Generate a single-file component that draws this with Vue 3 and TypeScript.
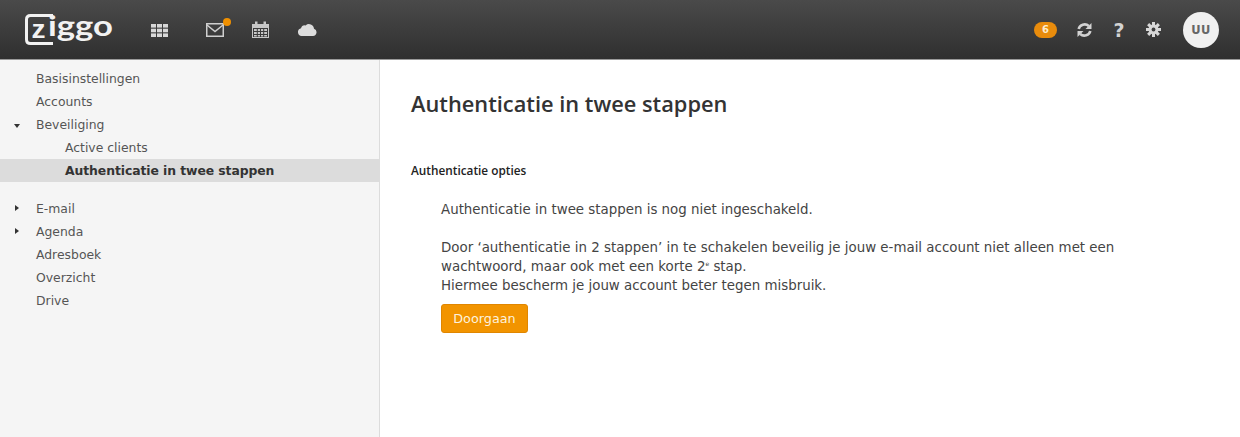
<script setup lang="ts">
interface NavItem { label: string; level: number; arrow?: 'down' | 'right'; active?: boolean; gap?: boolean }
const items: NavItem[] = [
  { label: 'Basisinstellingen', level: 0 },
  { label: 'Accounts', level: 0 },
  { label: 'Beveiliging', level: 0, arrow: 'down' },
  { label: 'Active clients', level: 1 },
  { label: 'Authenticatie in twee stappen', level: 1, active: true },
  { label: 'E-mail', level: 0, arrow: 'right', gap: true },
  { label: 'Agenda', level: 0, arrow: 'right' },
  { label: 'Adresboek', level: 0 },
  { label: 'Overzicht', level: 0 },
  { label: 'Drive', level: 0 },
]
</script>

<template>
  <div class="page">
    <header class="topbar">
      <svg class="logo" width="92" height="38" viewBox="0 0 92 38" fill="#f2f2f2">
        <path d="M29 4.500H6.500Q2.500 4.500 2.500 8.500V28.500Q2.500 32.500 6.500 32.500H29" fill="none" stroke="#f2f2f2" stroke-width="3" />
        <text x="7.500" y="26.500" font-family="Liberation Sans, sans-serif" font-weight="700" font-size="26" textLength="14" lengthAdjust="spacingAndGlyphs">z</text>
        <text x="24" y="25" font-family="Lato, sans-serif" font-weight="700" font-size="28" textLength="65" lengthAdjust="spacingAndGlyphs">iggo</text>
      </svg>
      <nav class="apps">
        <svg class="ic-grid" width="17" height="13" viewBox="0 0 17 13" fill="#d8d8d8">
          <rect x="0" y="0" width="5" height="3.600" /><rect x="6" y="0" width="5" height="3.600" /><rect x="12" y="0" width="5" height="3.600" />
          <rect x="0" y="4.700" width="5" height="3.600" /><rect x="6" y="4.700" width="5" height="3.600" /><rect x="12" y="4.700" width="5" height="3.600" />
          <rect x="0" y="9.400" width="5" height="3.600" /><rect x="6" y="9.400" width="5" height="3.600" /><rect x="12" y="9.400" width="5" height="3.600" />
        </svg>
        <span class="mail">
          <svg width="18" height="14" viewBox="0 0 18 14" fill="none" stroke="#cfcfcf" stroke-width="1.500">
            <rect x="0.750" y="0.750" width="16.500" height="12.500" />
            <path d="M1 2 9 8.500 17 2" />
          </svg>
          <i class="dot"></i>
        </span>
        <svg class="ic-cal" width="17" height="17" viewBox="0 0 17 17" fill="#c8c8c8">
          <path fill-rule="evenodd" d="M0 3H3V0.500H5.500V3H11.500V0.500H14V3H17V17H0ZM1 7V16H16V7Z" />
          <path d="M2 8H4.800V10H2ZM5.800 8H8V10H5.800ZM9 8H11.200V10H9ZM12.200 8H15V10H12.200ZM2 11H4.800V13H2ZM5.800 11H8V13H5.800ZM9 11H11.200V13H9ZM12.200 11H15V13H12.200ZM2 14H4.800V15.500H2ZM5.800 14H8V15.500H5.800ZM9 14H11.200V15.500H9ZM12.200 14H15V15.500H12.200Z" />
        </svg>
        <svg class="ic-cloud" width="19" height="14" viewBox="0 0 19 14" fill="#dcdcdc">
          <path d="M4 14A3.900 3.900 0 0 1 3 6.300 4 4 0 0 1 7.600 3.400 5 5 0 0 1 16 6.800 3.700 3.700 0 0 1 15 14Z" />
        </svg>
      </nav>
      <div class="tools">
        <span class="badge">6</span>
        <svg class="ic-sync" width="15" height="14" viewBox="0 0 15 14" fill="none" stroke="#d2d2d2" stroke-width="2.600">
          <path d="M1.700 6A6 5.500 0 0 1 11.800 3" />
          <path d="M13.300 8A6 5.500 0 0 1 3.200 11" />
          <path d="M14.500 0V6H8.500Z" fill="#d2d2d2" stroke="none" />
          <path d="M0.500 14V8H6.500Z" fill="#d2d2d2" stroke="none" />
        </svg>
        <span class="help">?</span>
        <svg class="ic-gear" width="15" height="15" viewBox="0 0 14 14">
          <path d="M7 0V14M0 7H14M2 2 12 12M12 2 2 12" stroke="#d8d8d8" stroke-width="2.800" />
          <circle cx="7" cy="7" r="4.600" fill="#d8d8d8" />
          <circle cx="7" cy="7" r="1.800" fill="#3e3e3e" />
        </svg>
        <span class="avatar">UU</span>
      </div>
    </header>
    <div class="body">
      <aside class="sidebar">
        <ul class="tree">
          <li
            v-for="item in items"
            :key="item.label"
            class="row"
            :class="{ active: item.active, sub: item.level === 1, gap: item.gap }"
          >
            <i v-if="item.arrow" class="arrow" :class="item.arrow"></i>{{ item.label }}
          </li>
        </ul>
      </aside>
      <main class="content">
        <h1>Authenticatie in twee stappen</h1>
        <h2>Authenticatie opties</h2>
        <div class="text">
          <p class="status">Authenticatie in twee stappen is nog niet ingeschakeld.</p>
          <p>Door ‘authenticatie in 2 stappen’ in te schakelen beveilig je jouw e-mail account niet alleen met een<br />wachtwoord, maar ook met een korte 2<sup>e</sup> stap.<br />Hiermee bescherm je jouw account beter tegen misbruik.</p>
          <button type="button" class="primary">Doorgaan</button>
        </div>
      </main>
    </div>
  </div>
</template>

<style>
html, body { margin: 0; background: #fff; overflow: hidden; }
</style>

<style scoped>
.page { width: 1240px; height: 437px; display: flex; flex-direction: column; font-family: "DejaVu Sans", sans-serif; font-size: 13px; color: #333; }
.topbar { height: 59px; flex: none; display: flex; align-items: center; background: linear-gradient(#4a4a4a, #2f2f2f); border-bottom: 1px solid #9a9a9a; padding: 0 21px 0 24px; }
.logo { display: block; flex: none; overflow: visible; }
.apps { display: flex; align-items: center; margin-left: 35px; }
.ic-grid { display: block; margin-top: 1px; }
.mail { position: relative; display: block; margin-left: 38px; width: 18px; height: 14px; margin-top: 1px; }
.mail svg { display: block; }
.dot { position: absolute; top: -5px; right: -7px; width: 8px; height: 8px; border-radius: 50%; background: #f09000; }
.ic-cal { margin-left: 28px; margin-top: -1px; }
.ic-cloud { margin-left: 29px; margin-top: -1px; }
.tools { margin-left: auto; display: flex; align-items: center; }
.badge { width: 23px; height: 16px; border-radius: 8px; background: #e98c0c; color: #fdeccd; font-size: 10px; font-weight: 700; display: flex; align-items: center; justify-content: center; }
.ic-sync { margin-left: 20px; }
.help { margin-left: 21px; width: 12px; text-align: center; color: #d2d2d2; font-weight: 700; font-size: 19px; line-height: 22px; font-family: "DejaVu Sans", sans-serif; }
.ic-gear { margin-left: 21px; }
.avatar { margin-left: 22px; width: 36px; height: 36px; border-radius: 50%; background: #f0f0f0; color: #666; font-size: 11.500px; font-weight: 700; letter-spacing: 0.4px; display: flex; align-items: center; justify-content: center; }
.body { flex: 1; display: flex; min-height: 0; }
.sidebar { width: 379px; flex: none; background: #f5f5f5; border-right: 1px solid #dcdcdc; padding-top: 7px; }
.tree { list-style: none; margin: 0; padding: 0; font-size: 12.400px; }
.row { position: relative; height: 23px; line-height: 23px; padding-left: 36px; color: #555; }
.row.sub { padding-left: 65px; }
.row.gap { margin-top: 15px; }
.row.active { background: #dcdcdc; color: #333; font-weight: 700; letter-spacing: -0.08px; }
.arrow { position: absolute; left: 14px; width: 0; height: 0; }
.arrow.down { top: 11px; border-left: 3.500px solid transparent; border-right: 3.500px solid transparent; border-top: 4px solid #333; }
.arrow.right { top: 8px; left: 15px; border-top: 3.500px solid transparent; border-bottom: 3.500px solid transparent; border-left: 4px solid #333; }
.content { flex: 1; padding: 29px 0 0 31px; }
h1 { margin: 0; font-family: "Open Sans", sans-serif; font-size: 21.800px; font-weight: 600; line-height: 30px; color: #333; }
h2 { margin: 43px 0 0; font-family: "Open Sans", sans-serif; font-size: 11.800px; font-weight: 600; line-height: 16px; color: #222; }
.text { margin: 22px 0 0 30px; color: #444; line-height: 19px; font-size: 13.380px; }
.text p { margin: 0; }
.status { margin-bottom: 19px !important; }
sup { font-size: 6px; line-height: 0; vertical-align: 5px; }
.primary { display: block; margin-top: 9px; width: 87px; height: 29px; padding: 0; border: 1px solid #e08600; border-radius: 3px; background: #f29400; color: #fdf2dd; font-family: inherit; font-size: 12.800px; }
</style>
